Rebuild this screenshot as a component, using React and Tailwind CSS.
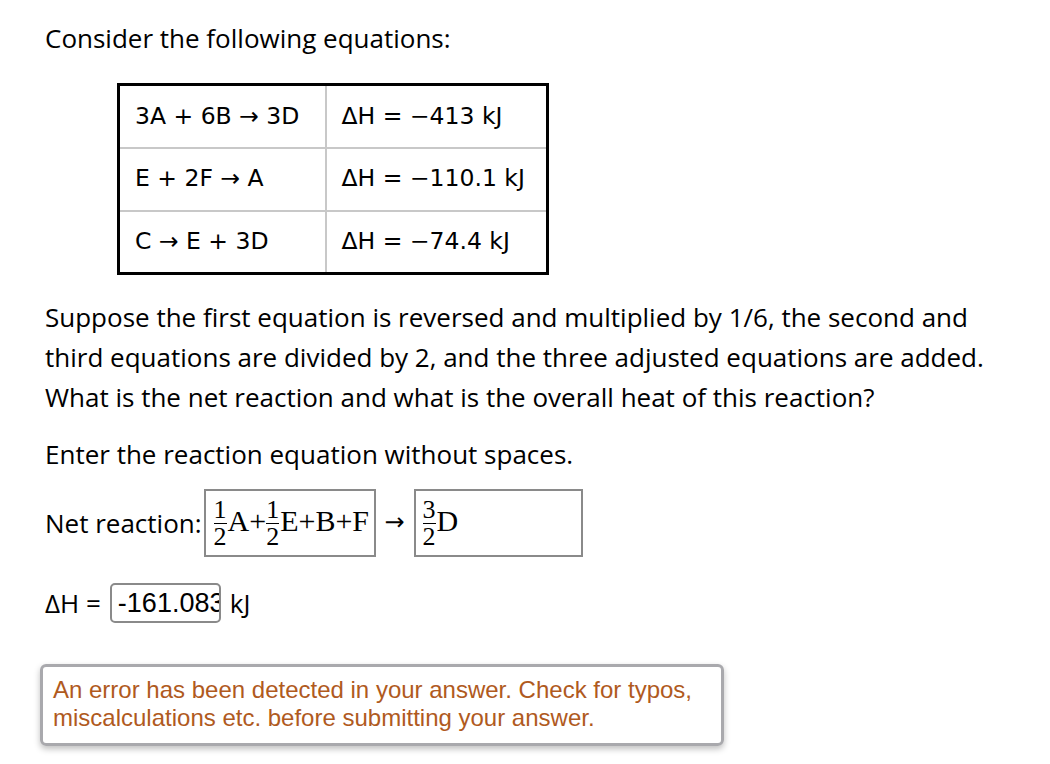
import React from 'react'

const Frac = ({ n, d }) => (
  <span className="inline-flex flex-col items-center mr-[1px] text-[26px] leading-[24px]">
    <span>{n}</span>
    <span className="block w-full h-[1px] bg-black my-[1px]"></span>
    <span>{d}</span>
  </span>
)

const Txt = ({ children }) => (
  <span className="leading-[30px] relative -top-[2px]">{children}</span>
)

const rows = [
  ['3A + 6B \u2192 3D', '\u0394H = \u2212413 kJ'],
  ['E + 2F \u2192 A', '\u0394H = \u2212110.1 kJ'],
  ['C \u2192 E + 3D', '\u0394H = \u221274.4 kJ'],
]

const App = () => {
  return (
    <div className="bg-white w-[1050px] h-[764px] pl-[45px] pt-[19px] text-black font-['Open_Sans',sans-serif] text-[26px]">
      <p className="leading-[38px]">Consider the following equations:</p>

      <table className="ml-[72px] mt-[26px] border-[3px] border-black border-collapse font-['DejaVu_Sans',sans-serif] text-[23.5px]">
        <tbody>
          {rows.map((r, i) => (
            <tr key={i} className="h-[63px]">
              <td className="border-2 border-[#c8c8c8] px-[15px] w-[207px] whitespace-nowrap">{r[0]}</td>
              <td className="border-2 border-[#c8c8c8] px-[15px] w-[222px] whitespace-nowrap">{r[1]}</td>
            </tr>
          ))}
        </tbody>
      </table>

      <p className="mt-[22px] leading-[40px] w-[960px]">
        Suppose the first equation is reversed and multiplied by 1/6, the second and third equations are divided by 2, and the three adjusted equations are added. What is the net reaction and what is the overall heat of this reaction?
      </p>

      <p className="mt-[17px] leading-[40px]">Enter the reaction equation without spaces.</p>

      <div className="flex items-center mt-[15px]">
        <span>Net reaction:</span>
        <div className="ml-[2px] w-[172px] h-[68px] border-2 border-[#8a8a8a] flex items-center pl-[8px] font-['Liberation_Serif',serif] text-[30px] whitespace-nowrap">
          <Frac n="1" d="2" /><Txt>A+</Txt><Frac n="1" d="2" /><Txt>E+B+F</Txt>
        </div>
        <span className="w-[38px] text-center font-['DejaVu_Sans',sans-serif] text-[24px] relative -top-[1px]">{'\u2192'}</span>
        <div className="w-[169px] h-[68px] border-2 border-[#8a8a8a] flex items-center pl-[7px] font-['Liberation_Serif',serif] text-[30px]">
          <Frac n="3" d="2" /><Txt>D</Txt>
        </div>
      </div>

      <div className="flex items-center mt-[26px]">
        <span>{'\u0394'}H =</span>
        <div className="ml-[9px] w-[111px] h-[40px] border-2 border-[#8a8a8a] rounded-[5px] overflow-hidden whitespace-nowrap flex items-center pl-[6px] font-['Liberation_Sans',sans-serif] text-[27px]">
          -161.083
        </div>
        <span className="ml-[9px]">kJ</span>
      </div>

      <div className="mt-[41px] ml-[-5px] w-[684px] border-[3px] border-[#a9a9ad] rounded-[6px] shadow-[0_3px_6px_rgba(0,0,0,0.25)] px-[10px] pt-[9px] pb-[11px] font-['Liberation_Sans',sans-serif] text-[24px] leading-[28px] text-[#b05a1e]">
        An error has been detected in your answer. Check for typos,<br />
        miscalculations etc. before submitting your answer.
      </div>
    </div>
  )
}

export default App
